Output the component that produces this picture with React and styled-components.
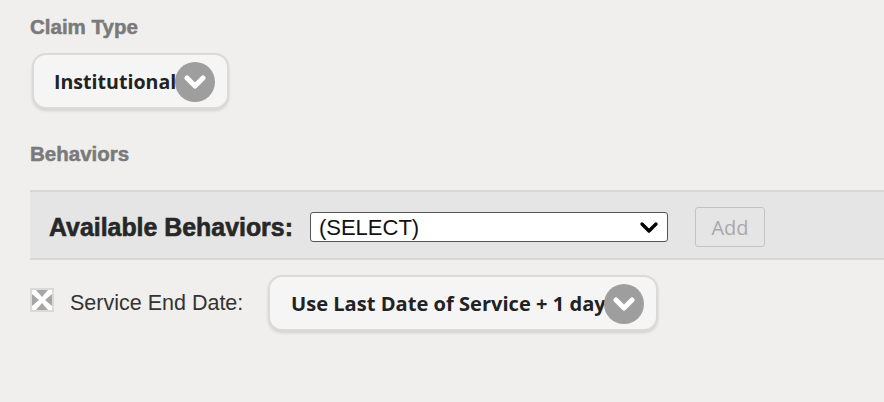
import React from "react";
import styled, { createGlobalStyle } from "styled-components";

const Global = createGlobalStyle`
  html, body { margin: 0; padding: 0; background: #f0efee; }
  body { width: 884px; height: 402px; overflow: hidden; }
`;

const Page = styled.div`
  padding: 14px 0 0 30px;
  display: flex;
  flex-direction: column;
  font-family: "Liberation Sans", Arial, sans-serif;
`;

const SectionLabel = styled.div`
  font-family: "Liberation Sans", Arial, sans-serif;
  font-weight: 700;
  font-size: 20.5px;
  line-height: 26px;
  color: #7a7a7a;
  -webkit-text-stroke: 0.5px #7a7a7a;
  margin-top: ${(p) => p.$mt || 0}px;
`;

const Pill = styled.div`
  box-sizing: border-box;
  display: flex;
  align-items: center;
  height: 56px;
  width: ${(p) => p.$w}px;
  padding: 0 12px 0 ${(p) => p.$pl || 20}px;
  background: #f5f5f5;
  border: 2px solid #dadada;
  border-radius: 14px;
  box-shadow: 0 2px 3px rgba(0, 0, 0, 0.12);
  margin-left: ${(p) => p.$ml || 0}px;
  margin-top: ${(p) => p.$mt || 0}px;
`;

const PillText = styled.span`
  font-family: "Open Sans", "Noto Sans", sans-serif;
  font-weight: 700;
  font-size: ${(p) => p.$fs || 20.1}px;
  color: #222;
  white-space: nowrap;
  flex: 1;
  min-width: 0;
`;

const ChevronCircle = styled.span`
  flex: none;
  width: 40px;
  height: 40px;
  border-radius: 50%;
  background: #9e9e9e;
  display: flex;
  align-items: center;
  justify-content: center;
  margin-left: -6px;
  margin-top: 2px;
`;

const Bar = styled.div`
  box-sizing: border-box;
  height: 70px;
  margin-top: 23px;
  background: #e5e5e5;
  border-top: 2px solid #d7d7d7;
  border-bottom: 2px solid #d7d7d7;
  display: flex;
  align-items: center;
  padding: 4px 0 0 19px;
`;

const BarLabel = styled.span`
  font-family: "Liberation Sans", Arial, sans-serif;
  font-weight: 700;
  font-size: 24.9px;
  color: #272727;
  -webkit-text-stroke: 0.6px #272727;
  white-space: nowrap;
`;

const SelectWrap = styled.div`
  position: relative;
  margin-left: 17px;
  width: 358px;
  height: 30px;
`;

const Select = styled.select`
  appearance: none;
  -webkit-appearance: none;
  box-sizing: border-box;
  width: 100%;
  height: 100%;
  background: #fff;
  border: 1px solid #555;
  border-radius: 3px;
  padding: 0 0 0 8px;
  font-family: "Liberation Sans", Arial, sans-serif;
  font-size: 22px;
  color: #111;
  outline: none;
`;

const SelectArrow = styled.svg`
  position: absolute;
  right: 9px;
  top: 9px;
  pointer-events: none;
`;

const AddButton = styled.button`
  box-sizing: border-box;
  margin-left: 27px;
  width: 70px;
  height: 40px;
  background: transparent;
  border: 1px solid #c3c3c3;
  border-radius: 3px;
  font-family: "Open Sans", "Noto Sans", sans-serif;
  font-size: 20px;
  color: #a9a9a9;
  padding: 0;
`;

const OptionRow = styled.div`
  display: flex;
  align-items: center;
  margin-top: 15px;
`;

const CheckIcon = styled.svg`
  flex: none;
  margin-bottom: 6px;
`;

const RowLabel = styled.span`
  font-family: "Liberation Sans", Arial, sans-serif;
  font-size: 21.5px;
  color: #333;
  margin-left: 16px;
  width: 198px;
  white-space: nowrap;
`;

const Chevron = ({ color = "#fff", w = 22, h = 14, sw = 5 }) => (
  <svg width={w} height={h} viewBox="0 0 22 14">
    <path
      d="M3 3 L11 11 L19 3"
      fill="none"
      stroke={color}
      strokeWidth={sw}
      strokeLinecap="round"
      strokeLinejoin="round"
    />
  </svg>
);

export default function App() {
  return (
    <>
      <Global />
      <Page>
        <SectionLabel>Claim Type</SectionLabel>
        <Pill $w={197} $ml={2} $mt={13}>
          <PillText $fs={19.6}>Institutional</PillText>
          <ChevronCircle>
            <Chevron />
          </ChevronCircle>
        </Pill>
        <SectionLabel $mt={32}>Behaviors</SectionLabel>
        <Bar>
          <BarLabel>Available Behaviors:</BarLabel>
          <SelectWrap>
            <Select defaultValue="select">
              <option value="select">(SELECT)</option>
            </Select>
            <SelectArrow width="20" height="13" viewBox="0 0 20 13">
              <path
                d="M3 3 L10 10 L17 3"
                fill="none"
                stroke="#000"
                strokeWidth="3.4"
                strokeLinecap="round"
                strokeLinejoin="round"
              />
            </SelectArrow>
          </SelectWrap>
          <AddButton disabled>Add</AddButton>
        </Bar>
        <OptionRow>
          <CheckIcon width="24" height="24" viewBox="0 0 24 24">
            <rect x="0" y="0" width="24" height="24" fill="#d9d9d9" />
            <rect x="2" y="2" width="20" height="20" fill="#fff" />
            <polygon points="6,2 18,2 12,9" fill="#a6a6a6" />
            <polygon points="6,22 18,22 12,15" fill="#a6a6a6" />
            <polygon points="2,6 2,18 9,12" fill="#a6a6a6" />
            <polygon points="22,6 22,18 15,12" fill="#a6a6a6" />
          </CheckIcon>
          <RowLabel>Service End Date:</RowLabel>
          <Pill $w={390} $pl={21}>
            <PillText>Use Last Date of Service + 1 day</PillText>
            <ChevronCircle>
              <Chevron />
            </ChevronCircle>
          </Pill>
        </OptionRow>
      </Page>
    </>
  );
}
